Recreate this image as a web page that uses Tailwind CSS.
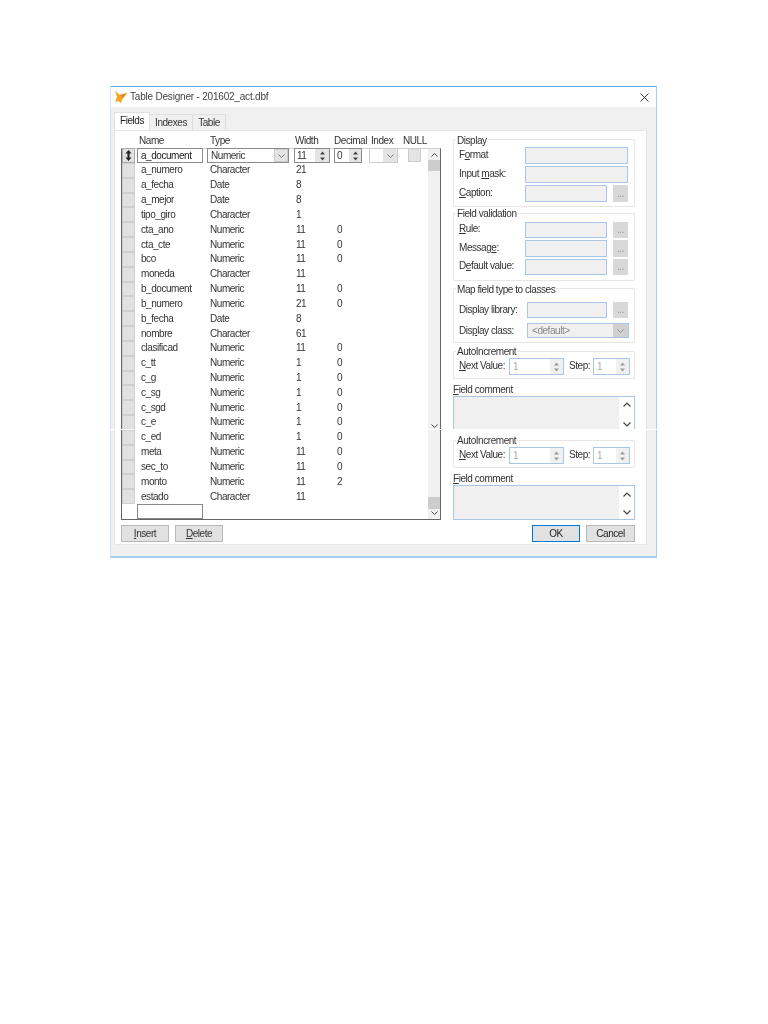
<!DOCTYPE html>
<html>
<head>
<meta charset="utf-8">
<script src="https://cdn.jsdelivr.net/npm/@tailwindcss/browser@4"></script>
</head>
<body class="bg-white">
<div class="w-[768px] h-[1024px] pt-[86px] pl-[110px] font-['Liberation_Sans',sans-serif] text-[10px] tracking-[-0.45px] leading-none text-[#333]">
  <div class="relative w-[547px] h-[472px] bg-[#f0f0f0] border-t border-t-[#5da9e0] border-l border-l-[#cfe3f4] border-r border-r-[#a5cdf0] border-b-2 border-b-[#a5d0ee] blur-[0.4px] flex flex-col">
    <!-- title bar -->
    <div class="h-[20px] shrink-0 bg-white flex items-center pl-[3px] pr-[7px]">
      <svg class="w-[14px] h-[14px] shrink-0" viewBox="0 0 14 14"><path d="M1 1 L6 5 L13 3 L9 8 L7 13 L4 11 L1 12 L3 7 Z" fill="#f5a623"/><path d="M6 5 L13 3 L9 8 Z" fill="#e8862a"/></svg>
      <span class="ml-[2px] text-[10px] text-[#444] tracking-[-0.2px]">Table Designer - 201602_act.dbf</span>
      <svg class="ml-auto w-[9px] h-[9px]" viewBox="0 0 9 9"><path d="M0.5 0.5 L8.5 8.5 M8.5 0.5 L0.5 8.5" stroke="#333" stroke-width="1" fill="none"/></svg>
    </div>
    <!-- tabs -->
    <div class="h-[23px] shrink-0 pl-[3px] flex items-end">
      <div class="w-[36px] h-[18px] bg-white border border-b-0 border-[#e0e0e0] flex items-center justify-center pb-[2px] text-[#222]">Fields</div>
      <div class="w-[43px] h-[16px] bg-[#f0f0f0] border border-b-0 border-l-0 border-[#dedede] flex items-center justify-center">Indexes</div>
      <div class="w-[33px] h-[16px] bg-[#f0f0f0] border border-b-0 border-l-0 border-[#dedede] flex items-center justify-center">Table</div>
    </div>
    <!-- panel -->
    <div class="ml-[3px] w-[533px] h-[415px] shrink-0 bg-white border border-[#e6e6e6] flex pl-[6px]">
      <!-- left column -->
      <div class="w-[320px] shrink-0 flex flex-col">
        <div class="h-[17px] shrink-0 grid grid-cols-[18px_71px_85px_39px_37px_32px_1fr] items-center pt-[2px]">
          <span></span><span>Name</span><span>Type</span><span>Width</span><span>Decimal</span><span>Index</span><span>NULL</span>
        </div>
        <div class="h-[372px] shrink-0 border border-[#666] border-t-[#d0d0d0] flex">
          <div class="w-[306px] shrink-0 flex flex-col">
            <!-- edit row -->
            <div class="-mt-px h-[15px] shrink-0 flex items-start">
              <div class="w-[13px] h-[15px] shrink-0 bg-[#e1e1e1] border border-[#aaa] flex items-center justify-center">
                <svg class="w-[7px] h-[11px]" viewBox="0 0 7 11"><path d="M3.5 0 L6.5 3.5 H4.5 V7.5 H6.5 L3.5 11 L0.5 7.5 H2.5 V3.5 H0.5 Z" fill="#222"/></svg>
              </div>
              <div class="ml-[2px] w-[66px] h-[15px] shrink-0 border border-[#8a8a8a] bg-white flex items-center pl-[3px] text-[#222]">a_document</div>
              <div class="ml-[4px] w-[82px] h-[15px] shrink-0 border border-[#8a8a8a] flex items-center pl-[3px] justify-between">Numeric
                <span class="w-[14px] h-[13px] bg-[#e4e4e4] border border-[#ccc] flex items-center justify-center">
                  <svg class="w-[7px] h-[4px]" viewBox="0 0 7 4"><path d="M0.5 0.5 L3.5 3.5 L6.5 0.5" stroke="#777" fill="none"/></svg>
                </span>
              </div>
              <div class="ml-[5px] w-[36px] h-[15px] shrink-0 border border-[#8a8a8a] flex items-center pl-[2px] justify-between">11
                <span class="w-[14px] h-[13px] bg-[#e4e4e4] flex items-center justify-center">
                  <svg class="w-[7px] h-[10px]" viewBox="0 0 7 10"><path d="M3.5 0.5 L6 3.5 H1 Z M3.5 9.5 L6 6.5 H1 Z" fill="#444"/></svg>
                </span>
              </div>
              <div class="ml-[4px] w-[28px] h-[15px] shrink-0 border border-[#8a8a8a] flex items-center pl-[2px] justify-between">0
                <span class="w-[12px] h-[13px] bg-[#e4e4e4] flex items-center justify-center">
                  <svg class="w-[7px] h-[10px]" viewBox="0 0 7 10"><path d="M3.5 0.5 L6 3.5 H1 Z M3.5 9.5 L6 6.5 H1 Z" fill="#444"/></svg>
                </span>
              </div>
              <div class="ml-[7px] w-[29px] h-[15px] shrink-0 border border-[#ccc] flex items-center justify-end">
                <span class="w-[14px] h-[13px] bg-[#e4e4e4] flex items-center justify-center">
                  <svg class="w-[7px] h-[4px]" viewBox="0 0 7 4"><path d="M0.5 0.5 L3.5 3.5 L6.5 0.5" stroke="#777" fill="none"/></svg>
                </span>
              </div>
              <div class="ml-[10px] w-[13px] h-[14px] shrink-0 bg-[#e4e4e4] border border-[#ccc]"></div>
            </div>
            <!-- data rows -->
            <div class="flex flex-col">
              <div class="h-[14.83px] grid grid-cols-[19px_69px_86px_41px_1fr] items-center"><span class="w-[13px] h-[14.83px] bg-[#e1e1e1] border border-[#cfcfcf]"></span><span>a_numero</span><span>Character</span><span>21</span><span></span></div>
              <div class="h-[14.83px] grid grid-cols-[19px_69px_86px_41px_1fr] items-center"><span class="w-[13px] h-[14.83px] bg-[#e1e1e1] border border-[#cfcfcf]"></span><span>a_fecha</span><span>Date</span><span>8</span><span></span></div>
              <div class="h-[14.83px] grid grid-cols-[19px_69px_86px_41px_1fr] items-center"><span class="w-[13px] h-[14.83px] bg-[#e1e1e1] border border-[#cfcfcf]"></span><span>a_mejor</span><span>Date</span><span>8</span><span></span></div>
              <div class="h-[14.83px] grid grid-cols-[19px_69px_86px_41px_1fr] items-center"><span class="w-[13px] h-[14.83px] bg-[#e1e1e1] border border-[#cfcfcf]"></span><span>tipo_giro</span><span>Character</span><span>1</span><span></span></div>
              <div class="h-[14.83px] grid grid-cols-[19px_69px_86px_41px_1fr] items-center"><span class="w-[13px] h-[14.83px] bg-[#e1e1e1] border border-[#cfcfcf]"></span><span>cta_ano</span><span>Numeric</span><span>11</span><span>0</span></div>
              <div class="h-[14.83px] grid grid-cols-[19px_69px_86px_41px_1fr] items-center"><span class="w-[13px] h-[14.83px] bg-[#e1e1e1] border border-[#cfcfcf]"></span><span>cta_cte</span><span>Numeric</span><span>11</span><span>0</span></div>
              <div class="h-[14.83px] grid grid-cols-[19px_69px_86px_41px_1fr] items-center"><span class="w-[13px] h-[14.83px] bg-[#e1e1e1] border border-[#cfcfcf]"></span><span>bco</span><span>Numeric</span><span>11</span><span>0</span></div>
              <div class="h-[14.83px] grid grid-cols-[19px_69px_86px_41px_1fr] items-center"><span class="w-[13px] h-[14.83px] bg-[#e1e1e1] border border-[#cfcfcf]"></span><span>moneda</span><span>Character</span><span>11</span><span></span></div>
              <div class="h-[14.83px] grid grid-cols-[19px_69px_86px_41px_1fr] items-center"><span class="w-[13px] h-[14.83px] bg-[#e1e1e1] border border-[#cfcfcf]"></span><span>b_document</span><span>Numeric</span><span>11</span><span>0</span></div>
              <div class="h-[14.83px] grid grid-cols-[19px_69px_86px_41px_1fr] items-center"><span class="w-[13px] h-[14.83px] bg-[#e1e1e1] border border-[#cfcfcf]"></span><span>b_numero</span><span>Numeric</span><span>21</span><span>0</span></div>
              <div class="h-[14.83px] grid grid-cols-[19px_69px_86px_41px_1fr] items-center"><span class="w-[13px] h-[14.83px] bg-[#e1e1e1] border border-[#cfcfcf]"></span><span>b_fecha</span><span>Date</span><span>8</span><span></span></div>
              <div class="h-[14.83px] grid grid-cols-[19px_69px_86px_41px_1fr] items-center"><span class="w-[13px] h-[14.83px] bg-[#e1e1e1] border border-[#cfcfcf]"></span><span>nombre</span><span>Character</span><span>61</span><span></span></div>
              <div class="h-[14.83px] grid grid-cols-[19px_69px_86px_41px_1fr] items-center"><span class="w-[13px] h-[14.83px] bg-[#e1e1e1] border border-[#cfcfcf]"></span><span>clasificad</span><span>Numeric</span><span>11</span><span>0</span></div>
              <div class="h-[14.83px] grid grid-cols-[19px_69px_86px_41px_1fr] items-center"><span class="w-[13px] h-[14.83px] bg-[#e1e1e1] border border-[#cfcfcf]"></span><span>c_tt</span><span>Numeric</span><span>1</span><span>0</span></div>
              <div class="h-[14.83px] grid grid-cols-[19px_69px_86px_41px_1fr] items-center"><span class="w-[13px] h-[14.83px] bg-[#e1e1e1] border border-[#cfcfcf]"></span><span>c_g</span><span>Numeric</span><span>1</span><span>0</span></div>
              <div class="h-[14.83px] grid grid-cols-[19px_69px_86px_41px_1fr] items-center"><span class="w-[13px] h-[14.83px] bg-[#e1e1e1] border border-[#cfcfcf]"></span><span>c_sg</span><span>Numeric</span><span>1</span><span>0</span></div>
              <div class="h-[14.83px] grid grid-cols-[19px_69px_86px_41px_1fr] items-center"><span class="w-[13px] h-[14.83px] bg-[#e1e1e1] border border-[#cfcfcf]"></span><span>c_sgd</span><span>Numeric</span><span>1</span><span>0</span></div>
              <div class="h-[14.83px] grid grid-cols-[19px_69px_86px_41px_1fr] items-center"><span class="w-[13px] h-[14.83px] bg-[#e1e1e1] border border-[#cfcfcf]"></span><span>c_e</span><span>Numeric</span><span>1</span><span>0</span></div>
              <div class="h-[14.83px] grid grid-cols-[19px_69px_86px_41px_1fr] items-center"><span class="w-[13px] h-[14.83px] bg-[#e1e1e1] border border-[#cfcfcf]"></span><span>c_ed</span><span>Numeric</span><span>1</span><span>0</span></div>
              <div class="h-[14.83px] grid grid-cols-[19px_69px_86px_41px_1fr] items-center"><span class="w-[13px] h-[14.83px] bg-[#e1e1e1] border border-[#cfcfcf]"></span><span>meta</span><span>Numeric</span><span>11</span><span>0</span></div>
              <div class="h-[14.83px] grid grid-cols-[19px_69px_86px_41px_1fr] items-center"><span class="w-[13px] h-[14.83px] bg-[#e1e1e1] border border-[#cfcfcf]"></span><span>sec_to</span><span>Numeric</span><span>11</span><span>0</span></div>
              <div class="h-[14.83px] grid grid-cols-[19px_69px_86px_41px_1fr] items-center"><span class="w-[13px] h-[14.83px] bg-[#e1e1e1] border border-[#cfcfcf]"></span><span>monto</span><span>Numeric</span><span>11</span><span>2</span></div>
              <div class="h-[14.83px] grid grid-cols-[19px_69px_86px_41px_1fr] items-center"><span class="w-[13px] h-[14.83px] bg-[#e1e1e1] border border-[#cfcfcf]"></span><span>estado</span><span>Character</span><span>11</span><span></span></div>
            </div>
            <div class="ml-[15px] w-[66px] h-[15px] shrink-0 border border-[#8a8a8a] bg-white"></div>
          </div>
          <!-- scrollbar -->
          <div class="ml-auto w-[12px] h-full bg-[#f0f0f0] flex flex-col items-center">
            <svg class="mt-[4px] w-[7px] h-[4px]" viewBox="0 0 7 4"><path d="M0.5 3.5 L3.5 0.5 L6.5 3.5" stroke="#444" fill="none"/></svg>
            <div class="mt-[3px] w-full h-[11px] bg-[#cdcdcd]"></div>
            <svg class="mt-[253px] w-[7px] h-[4px]" viewBox="0 0 7 4"><path d="M0.5 0.5 L3.5 3.5 L6.5 0.5" stroke="#444" fill="none"/></svg>
            <div class="mt-[69px] w-full h-[12px] bg-[#cdcdcd]"></div>
            <svg class="mt-[2px] w-[7px] h-[4px]" viewBox="0 0 7 4"><path d="M0.5 0.5 L3.5 3.5 L6.5 0.5" stroke="#444" fill="none"/></svg>
          </div>
        </div>
        <div class="mt-[5px] flex gap-[6px]">
          <div class="w-[48px] h-[17px] bg-[#e1e1e1] border border-[#b8b8b8] flex items-center justify-center"><span><u>I</u>nsert</span></div>
          <div class="w-[48px] h-[17px] bg-[#e1e1e1] border border-[#b8b8b8] flex items-center justify-center"><span><u>D</u>elete</span></div>
        </div>
      </div>
      <!-- right column -->
      <div class="ml-[12px] w-[182px] shrink-0 flex flex-col">
        <!-- Display -->
        <div class="relative mt-[8px] h-[68px] shrink-0 border border-[#e6e6e6] rounded-[2px] pt-[7px] pl-[5px] flex flex-col">
          <span class="absolute -top-[4px] left-[2px] bg-white px-px">Display</span>
          <div class="h-[17px] flex items-center"><span class="w-[66px] shrink-0 pb-[2px]">F<u>o</u>rmat</span><div class="w-[103px] h-[17px] bg-[#f0f0f0] border border-[#a9c6e4]"></div></div>
          <div class="mt-[2px] h-[17px] flex items-center"><span class="w-[66px] shrink-0 pb-[2px]">Input <u>m</u>ask:</span><div class="w-[103px] h-[17px] bg-[#f0f0f0] border border-[#a9c6e4]"></div></div>
          <div class="mt-[2px] h-[17px] flex items-center"><span class="w-[66px] shrink-0 pb-[2px]"><u>C</u>aption:</span><div class="w-[82px] h-[17px] bg-[#f0f0f0] border border-[#a9c6e4]"></div><div class="ml-[6px] w-[15px] h-[17px] bg-[#d8d8d8] flex items-end justify-center pb-[3px] text-[#999]">...</div></div>
        </div>
        <!-- Field validation -->
        <div class="relative mt-[6px] h-[68px] shrink-0 border border-[#e6e6e6] rounded-[2px] pt-[8px] pl-[5px] flex flex-col">
          <span class="absolute -top-[5px] left-[2px] bg-white px-px">Field validation</span>
          <div class="h-[16px] flex items-center"><span class="w-[66px] shrink-0 pb-[2px]"><u>R</u>ule:</span><div class="w-[82px] h-[16px] bg-[#f0f0f0] border border-[#a9c6e4]"></div><div class="ml-[6px] w-[15px] h-[16px] bg-[#d8d8d8] flex items-end justify-center pb-[3px] text-[#999]">...</div></div>
          <div class="mt-[2px] h-[17px] flex items-center"><span class="w-[66px] shrink-0 pb-[2px]">Messag<u>e</u>:</span><div class="w-[82px] h-[17px] bg-[#f0f0f0] border border-[#a9c6e4]"></div><div class="ml-[6px] w-[15px] h-[17px] bg-[#d8d8d8] flex items-end justify-center pb-[3px] text-[#999]">...</div></div>
          <div class="mt-[2px] h-[16px] flex items-center"><span class="w-[66px] shrink-0 pb-[2px]">D<u>e</u>fault value:</span><div class="w-[82px] h-[16px] bg-[#f0f0f0] border border-[#a9c6e4]"></div><div class="ml-[6px] w-[15px] h-[16px] bg-[#d8d8d8] flex items-end justify-center pb-[3px] text-[#999]">...</div></div>
        </div>
        <!-- Map -->
        <div class="relative mt-[7px] h-[55px] shrink-0 border border-[#e6e6e6] rounded-[2px] pt-[13px] pl-[5px] flex flex-col">
          <span class="absolute -top-[4px] left-[2px] bg-white px-px">Map field type to classes</span>
          <div class="h-[16px] flex items-center"><span class="w-[68px] shrink-0">Display library:</span><div class="w-[80px] h-[16px] bg-[#f0f0f0] border border-[#a9c6e4]"></div><div class="ml-[6px] w-[15px] h-[16px] bg-[#d8d8d8] flex items-end justify-center pb-[3px] text-[#999]">...</div></div>
          <div class="mt-[5px] h-[15px] flex items-center"><span class="w-[68px] shrink-0">Dis<u>p</u>lay class:</span><div class="w-[102px] h-[15px] bg-[#f0f0f0] border border-[#a9c6e4] flex items-center justify-between pl-[4px] text-[#888]">&lt;default&gt;<span class="w-[15px] h-[13px] bg-[#d0d0d0] flex items-center justify-center"><svg class="w-[7px] h-[4px]" viewBox="0 0 7 4"><path d="M0.5 0.5 L3.5 3.5 L6.5 0.5" stroke="#999" fill="none"/></svg></span></div></div>
        </div>
        <!-- Auto 1 -->
        <div class="relative mt-[8px] h-[28px] shrink-0 border border-[#e6e6e6] rounded-[2px] pt-[6px] pl-[5px] flex items-start">
          <span class="absolute -top-[5px] left-[2px] bg-white px-px">AutoIncrement</span>
          <span class="w-[50px] shrink-0 mt-[3px]"><u>N</u>ext Value:</span>
          <div class="w-[55px] h-[17px] bg-white border border-[#a9c6e4] flex items-center justify-between pl-[3px] text-[#aaa]">1<span class="w-[13px] h-[15px] bg-[#f0f0f0] flex items-center justify-center"><svg class="w-[7px] h-[10px]" viewBox="0 0 7 10"><path d="M3.5 0.5 L6 3.5 H1 Z M3.5 9.5 L6 6.5 H1 Z" fill="#999"/></svg></span></div>
          <span class="ml-[5px] w-[24px] shrink-0 mt-[3px]">Step:</span>
          <div class="w-[37px] h-[17px] bg-white border border-[#a9c6e4] flex items-center justify-between pl-[3px] text-[#aaa]">1<span class="w-[13px] h-[15px] bg-[#f0f0f0] flex items-center justify-center"><svg class="w-[7px] h-[10px]" viewBox="0 0 7 10"><path d="M3.5 0.5 L6 3.5 H1 Z M3.5 9.5 L6 6.5 H1 Z" fill="#999"/></svg></span></div>
        </div>
        <div class="mt-[6px] h-[11px] shrink-0"><u>F</u>ield comment</div>
        <div class="h-[34px] shrink-0 bg-[#f0f0f0] border border-b-0 border-[#a9c6e4] flex justify-end">
          <div class="w-[15px] bg-white flex flex-col items-center pt-[5px]">
            <svg class="w-[8px] h-[5px]" viewBox="0 0 8 5"><path d="M0.5 4.5 L4 1 L7.5 4.5" stroke="#444" stroke-width="1.2" fill="none"/></svg>
            <svg class="mt-[15px] w-[8px] h-[5px]" viewBox="0 0 8 5"><path d="M0.5 0.5 L4 4 L7.5 0.5" stroke="#444" stroke-width="1.2" fill="none"/></svg>
          </div>
        </div>
        <!-- Auto 2 -->
        <div class="relative mt-[10px] h-[28px] shrink-0 border border-[#e6e6e6] rounded-[2px] pt-[6px] pl-[5px] flex items-start">
          <span class="absolute -top-[5px] left-[2px] bg-white px-px">AutoIncrement</span>
          <span class="w-[50px] shrink-0 mt-[3px]"><u>N</u>ext Value:</span>
          <div class="w-[55px] h-[17px] bg-white border border-[#a9c6e4] flex items-center justify-between pl-[3px] text-[#aaa]">1<span class="w-[13px] h-[15px] bg-[#f0f0f0] flex items-center justify-center"><svg class="w-[7px] h-[10px]" viewBox="0 0 7 10"><path d="M3.5 0.5 L6 3.5 H1 Z M3.5 9.5 L6 6.5 H1 Z" fill="#999"/></svg></span></div>
          <span class="ml-[5px] w-[24px] shrink-0 mt-[3px]">Step:</span>
          <div class="w-[37px] h-[17px] bg-white border border-[#a9c6e4] flex items-center justify-between pl-[3px] text-[#aaa]">1<span class="w-[13px] h-[15px] bg-[#f0f0f0] flex items-center justify-center"><svg class="w-[7px] h-[10px]" viewBox="0 0 7 10"><path d="M3.5 0.5 L6 3.5 H1 Z M3.5 9.5 L6 6.5 H1 Z" fill="#999"/></svg></span></div>
        </div>
        <div class="mt-[6px] h-[11px] shrink-0"><u>F</u>ield comment</div>
        <div class="h-[35px] shrink-0 bg-[#f0f0f0] border border-[#a9c6e4] flex justify-end">
          <div class="w-[15px] bg-white flex flex-col items-center pt-[6px]">
            <svg class="w-[8px] h-[5px]" viewBox="0 0 8 5"><path d="M0.5 4.5 L4 1 L7.5 4.5" stroke="#444" stroke-width="1.2" fill="none"/></svg>
            <svg class="mt-[13px] w-[8px] h-[5px]" viewBox="0 0 8 5"><path d="M0.5 0.5 L4 4 L7.5 0.5" stroke="#444" stroke-width="1.2" fill="none"/></svg>
          </div>
        </div>
        <div class="mt-[5px] flex justify-end gap-[6px]">
          <div class="w-[48px] h-[17px] bg-[#e1e1e1] border border-[#0078d7] flex items-center justify-center text-[#222]">OK</div>
          <div class="w-[49px] h-[17px] bg-[#e1e1e1] border border-[#b8b8b8] flex items-center justify-center text-[#222]">Cancel</div>
        </div>
      </div>
    </div>
    <!-- screenshot seam -->
    <div class="absolute left-[-2px] right-[-2px] top-[342px] h-[1px] bg-white"></div>
  </div>
</div>
</body>
</html>
